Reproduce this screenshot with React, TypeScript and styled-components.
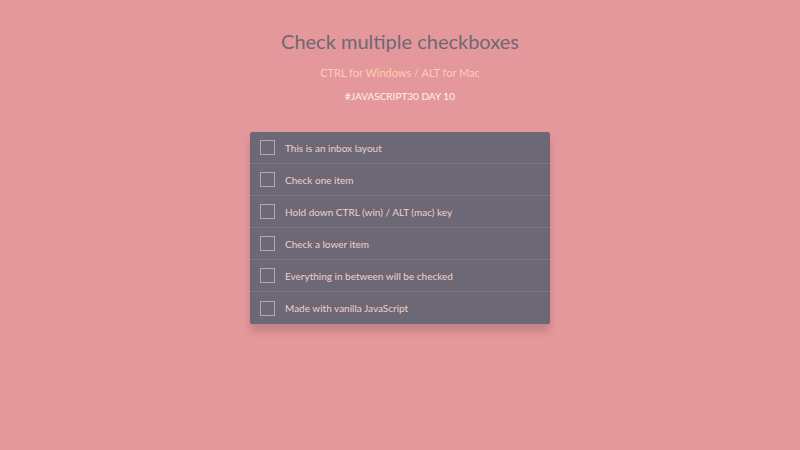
import React from 'react'
import styled, { createGlobalStyle } from 'styled-components'

const GlobalStyle = createGlobalStyle`
    html, body {
        margin: 0;
        padding: 0;
        background: #e5989b;
        font-family: Lato, 'Noto Sans', sans-serif;
    }
`

const Page = styled.div`
    width: 800px;
    height: 450px;
    display: flex;
    flex-direction: column;
    align-items: center;
    padding-top: 27px;
    box-sizing: border-box;
`
const Title = styled.h1`
    margin: 0;
    font-size: 20px;
    font-weight: 400;
    color: #6d6875;
    line-height: 28px;
`
const Subtitle = styled.p`
    margin: 10px 0 0;
    font-size: 11px;
    color: #ffcdb2;
    line-height: 16px;
`
const Tag = styled.p`
    margin: 8px 0 0;
    font-size: 10px;
    color: #fff1ea;
    line-height: 14px;
`
const Inbox = styled.div`
    margin-top: 29px;
    width: 300px;
    background: #6d6875;
    border-radius: 2px;
    box-shadow: 0 7px 9px rgba(0, 0, 0, 0.15);
`
const Item = styled.label<{ $last?: boolean }>`
    display: flex;
    align-items: center;
    height: 32px;
    box-sizing: border-box;
    padding-left: 10px;
    border-bottom: ${(p) => (p.$last ? 'none' : '1px solid #7b7582')};
`
const Box = styled.span`
    width: 15px;
    height: 15px;
    box-sizing: border-box;
    border: 1px solid #b7a6ae;
    margin-right: 10px;
`
const Text = styled.span`
    font-size: 10px;
    color: #f0d2ca;
`

const items = [
    'This is an inbox layout',
    'Check one item',
    'Hold down CTRL (win) / ALT (mac) key',
    'Check a lower item',
    'Everything in between will be checked',
    'Made with vanilla JavaScript',
]

export default function App() {
    return (
        <>
            <GlobalStyle />
            <Page>
                <Title>Check multiple checkboxes</Title>
                <Subtitle>CTRL for Windows / ALT for Mac</Subtitle>
                <Tag>#JAVASCRIPT30 DAY 10</Tag>
                <Inbox>
                    {items.map((t, i) => (
                        <Item key={t} $last={i === items.length - 1}>
                            <Box />
                            <Text>{t}</Text>
                        </Item>
                    ))}
                </Inbox>
            </Page>
        </>
    )
}
